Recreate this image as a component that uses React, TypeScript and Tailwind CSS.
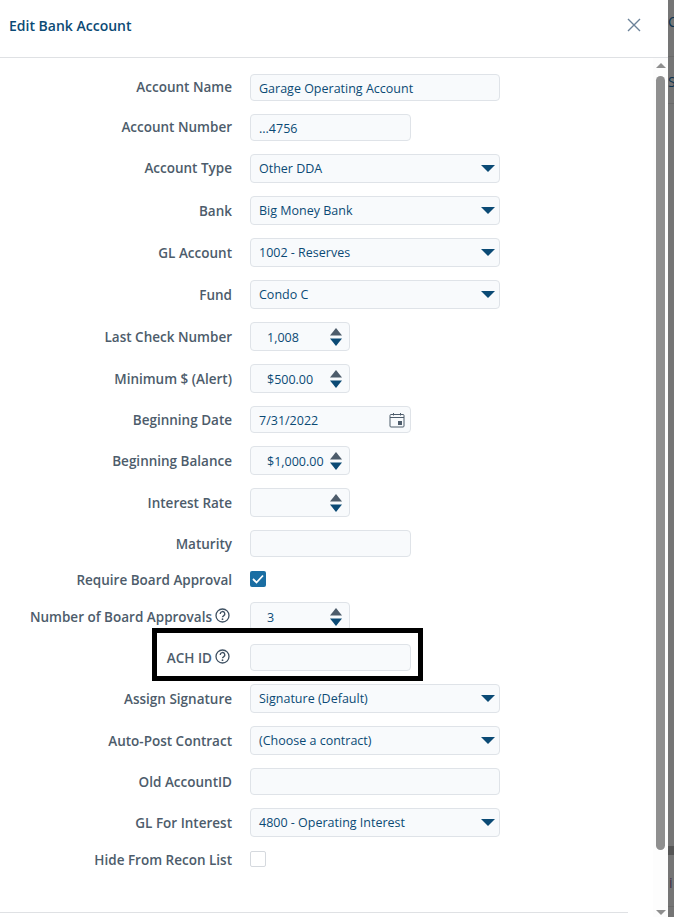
const inputBase =
  "flex items-center rounded-[4px] border border-[#dfe3e8] bg-[#f8fafc] text-[12.5px] text-[#0b4a75]";

function Label({ text, help, top }: { text: string; help?: boolean; top?: boolean }) {
  return (
    <div className={`flex w-[232px] shrink-0 items-center justify-end text-[13.5px] font-semibold text-[#4d5c6b] ${top ? "" : "pt-[2px]"}`}>
      <span>{text}</span>
      {help && <HelpIcon />}
    </div>
  );
}

function HelpIcon() {
  return (
    <svg width="15" height="15" viewBox="0 0 15 15" fill="none" className="-mt-[4px] ml-[3px] mr-[2px]">
      <circle cx="7.5" cy="7.5" r="6.5" stroke="#3f5163" strokeWidth="1.3" />
      <path d="M5.2 5.9a2.3 2.3 0 1 1 3.4 2c-.7.4-1.1.7-1.1 1.4" stroke="#3f5163" strokeWidth="1.4" />
      <circle cx="7.5" cy="11.2" r=".9" fill="#3f5163" />
    </svg>
  );
}

function Text({ value, wide }: { value?: string; wide?: boolean }) {
  return (
    <div className={`${inputBase} h-[27px] px-[8px] ${wide ? "w-[250px]" : "w-[161px]"}`}>
      <span className="pt-[3px]">{value}</span>
    </div>
  );
}

function Select({ value }: { value: string }) {
  return (
    <div className={`${inputBase} h-[29px] w-[250px] justify-between pl-[8px] pr-[4px]`}>
      <span className="pt-[2px]">{value}</span>
      <svg width="14" height="7" viewBox="0 0 14 7">
        <path d="M0 0h14L7 7z" fill="#0b4a75" />
      </svg>
    </div>
  );
}

function Spinner({ value }: { value?: string }) {
  return (
    <div className={`${inputBase} h-[29px] w-[100px] justify-between pr-[7px]`}>
      <span className="pl-[16px] pt-[3px]">{value}</span>
      <svg width="12" height="18" viewBox="0 0 12 18" className="shrink-0">
        <path d="M6 0l6 7.5H0z" fill="#4d5c6b" />
        <path d="M0 10.5h12L6 18z" fill="#0b4a75" />
      </svg>
    </div>
  );
}

function DateInput({ value }: { value: string }) {
  return (
    <div className={`${inputBase} h-[27px] w-[161px] justify-between pl-[8px] pr-[5px]`}>
      <span className="pt-[3px]">{value}</span>
      <svg width="16" height="16" viewBox="0 0 16 16" fill="none">
        <rect x="1" y="2.5" width="14" height="12.5" rx="1" stroke="#4d5c6b" />
        <path d="M1 5.5h14" stroke="#4d5c6b" />
        <path d="M4.5 1v2.5M11.5 1v2.5" stroke="#4d5c6b" />
        <rect x="9" y="9" width="4" height="4" fill="#4d5c6b" />
      </svg>
    </div>
  );
}

function Row({ label, help, top, children, h }: { label: string; help?: boolean; top?: boolean; children: React.ReactNode; h?: string }) {
  return (
    <div className={`flex gap-[18px] ${h ?? ""}`}>
      <Label text={label} help={help} top={top} />
      {children}
    </div>
  );
}

export default function App() {
  return (
    <div className="relative flex h-[917px] w-[674px] overflow-hidden bg-[#757575] font-['Open_Sans','Noto_Sans',sans-serif]">
      {/* modal */}
      <div className="flex h-full w-[668px] shrink-0 flex-col bg-white">
        <div className="flex h-[58px] shrink-0 items-center justify-between border-b border-[#dfe1e4] pl-[9px] pr-[27px]">
          <h1 className="-mt-[6px] text-[14px] font-semibold text-[#0b4a75]">Edit Bank Account</h1>
          <svg width="14" height="14" viewBox="0 0 14 14" className="-mt-[7px]">
            <path d="M1 1l12 12M13 1L1 13" stroke="#6b8299" strokeWidth="1.4" />
          </svg>
        </div>
        <div className="flex min-h-0 flex-1">
          <div className="flex flex-1 flex-col">
            <div className="flex flex-1 flex-col gap-[13px] pt-[16px]">
              <Row label="Account Name" top><Text value="Garage Operating Account" wide /></Row>
              <Row label="Account Number" top><Text value="...4756" /></Row>
              <Row label="Account Type" top><Select value="Other DDA" /></Row>
              <Row label="Bank"><Select value="Big Money Bank" /></Row>
              <Row label="GL Account"><Select value="1002 - Reserves" /></Row>
              <Row label="Fund"><Select value="Condo C" /></Row>
              <Row label="Last Check Number"><Spinner value="1,008" /></Row>
              <Row label="Minimum $ (Alert)"><Spinner value="$500.00" /></Row>
              <Row label="Beginning Date"><DateInput value="7/31/2022" /></Row>
              <Row label="Beginning Balance"><Spinner value="$1,000.00" /></Row>
              <Row label="Interest Rate"><Spinner /></Row>
              <Row label="Maturity"><Text /></Row>
              <Row label="Require Board Approval" h="h-[19px]">
                <div className="mt-px flex h-4 w-4 items-center justify-center rounded-[2px] bg-[#1a6ea3]">
                  <svg width="12" height="10" viewBox="0 0 12 10" fill="none">
                    <path d="M1 5l3.5 3.5L11 1.5" stroke="#fff" strokeWidth="1.8" />
                  </svg>
                </div>
              </Row>
              <Row label="Number of Board Approvals" help><Spinner value="3" /></Row>
              <Row label="ACH ID" help><Text /></Row>
              <Row label="Assign Signature"><Select value="Signature (Default)" /></Row>
              <Row label="Auto-Post Contract"><Select value="(Choose a contract)" /></Row>
              <Row label="Old AccountID"><Text wide /></Row>
              <Row label="GL For Interest"><Select value="4800 - Operating Interest" /></Row>
              <Row label="Hide From Recon List" h="h-[19px]">
                <div className="mt-px h-4 w-4 rounded-[2px] border border-[#d5d9de] bg-white" />
              </Row>
            </div>
            <div className="mb-[4px] mr-[25px] h-px bg-[#dfe1e4]" />
          </div>
          {/* scrollbar */}
          <div className="flex w-[15px] shrink-0 flex-col items-center bg-[#fdfdfd] pt-[5px]">
            <div className="h-0 w-0 border-x-[5px] border-b-[5px] border-x-transparent border-b-[#8f8f8f]" />
            <div className="mt-[8px] h-[774px] w-[9px] rounded-full bg-[#8f8f8f]" />
            <div className="mt-auto mb-[2px] h-0 w-0 border-x-[5px] border-t-[5px] border-x-transparent border-t-[#8f8f8f]" />
          </div>
        </div>
      </div>
      {/* dimmed page behind the modal */}
      <div className="relative flex-1 overflow-hidden text-[14px] text-[#0b3350]">
        <span className="absolute left-0 top-[11px]">C</span>
        <span className="absolute left-0 top-[71px]">S</span>
        <span className="absolute left-[1px] top-[872px] text-[#3a2f4a]">i</span>
        <div className="absolute inset-x-0 top-[56px] h-px bg-[#6a6a6a]" />
        <div className="absolute inset-x-0 top-[103px] h-px bg-[#6a6a6a]" />
        <div className="absolute inset-x-0 top-[846px] h-[9px] bg-[#555555]" />
        <div className="absolute inset-x-0 top-[906px] h-px bg-[#6a6a6a]" />
      </div>
      {/* annotation box */}
      <div className="absolute left-[152px] top-[628px] h-[53px] w-[271px] border-[5px] border-black" />
    </div>
  );
}
